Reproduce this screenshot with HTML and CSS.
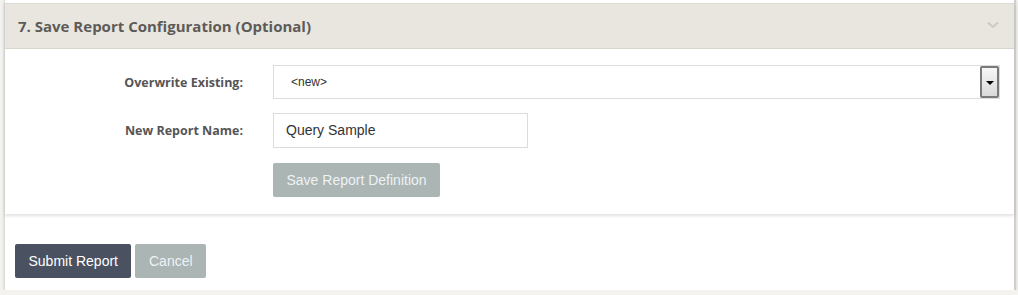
FILE: index.html
```html
<!DOCTYPE html>
<html lang="en">
<head>
    <meta charset="UTF-8">
    <title>Save Report</title>
    <link rel="stylesheet" href="styles.css">
</head>
<body>
    <div class="page">
        <!-- Step 7 panel -->
        <div class="panel">
            <div class="panel-header">
                <h3>7. Save Report Configuration (Optional)</h3>
                <svg class="chevron" width="12" height="8" viewBox="0 0 12 8"><path d="M1 1.5 L6 6 L11 1.5" fill="none" stroke="#cdcac2" stroke-width="2"/></svg>
            </div>
            <div class="panel-body">
                <div class="form-row">
                    <label>Overwrite Existing:</label>
                    <div class="select-box">
                        <span class="select-text">&lt;new&gt;</span>
                        <span class="select-arrow"><span class="tri"></span></span>
                    </div>
                </div>
                <div class="form-row">
                    <label>New Report Name:</label>
                    <div class="text-input">Query Sample</div>
                </div>
                <div class="form-row form-row-btn">
                    <span></span>
                    <div><button class="btn btn-grey">Save Report Definition</button></div>
                </div>
            </div>
        </div>

        <div class="actions">
            <button class="btn btn-dark">Submit Report</button>
            <button class="btn btn-grey">Cancel</button>
        </div>
    </div>
</body>
</html>
```

FILE: styles.css
```css
body {
    margin: 0;
    padding: 0;
    background-color: #f4f3ef;
    font-family: "Liberation Sans", Arial, sans-serif;
}
.page {
    margin: 0 2px 0 4px;
    height: 290px;
    box-sizing: border-box;
    background-color: #fff;
    border-left: 1px solid #dcdcdc;
    border-right: 2px solid #cfcfcf;
    box-shadow: 0 1px 3px rgba(0, 0, 0, 0.15);
    padding-top: 3px;
}
.panel {
    background-color: #fff;
    border-top: 1px solid #dedbd3;
    box-shadow: 0 2px 3px rgba(0, 0, 0, 0.12);
}
.panel-header {
    height: 45px;
    background-color: #e9e6df;
    border-bottom: 1px solid #d9d6ce;
    display: flex;
    align-items: center;
    justify-content: space-between;
    padding: 0 15px 0 13px;
    box-sizing: border-box;
}
.panel-header h3 {
    margin: 0;
    font-family: "Open Sans", sans-serif;
    font-size: 15px;
    font-weight: 700;
    color: #5d5b58;
}
.chevron {
    margin-top: -2px;
}
.panel-body {
    padding: 16px 14px 17px 0;
    display: flex;
    flex-direction: column;
    gap: 14px;
}
.form-row-btn {
    margin-top: 1px;
}
.form-row {
    display: grid;
    grid-template-columns: 238px 1fr;
    column-gap: 30px;
    align-items: center;
}
.form-row label {
    text-align: right;
    font-family: "Open Sans", sans-serif;
    font-size: 12.5px;
    font-weight: 700;
    color: #555;
}
.select-box {
    height: 34px;
    box-sizing: border-box;
    border: 1px solid #dcdcdc;
    display: flex;
    align-items: center;
}
.select-text {
    flex: 1;
    padding-left: 17px;
    font-size: 12px;
    color: #333;
}
.select-arrow {
    width: 19px;
    height: 32px;
    box-sizing: border-box;
    border: 2px solid #7a7a7a;
    border-radius: 2px;
    background: linear-gradient(#f7f7f7, #d9d9d9);
    display: flex;
    align-items: center;
    justify-content: center;
}
.tri {
    width: 0;
    height: 0;
    border-left: 4px solid transparent;
    border-right: 4px solid transparent;
    border-top: 4px solid #000;
    margin-top: 2px;
}
.text-input {
    width: 255px;
    height: 35px;
    box-sizing: border-box;
    border: 1px solid #dcdcdc;
    padding-left: 12px;
    line-height: 33px;
    font-size: 14px;
    color: #333;
}
.btn {
    font-family: "Liberation Sans", Arial, sans-serif;
    font-size: 14px;
    height: 34px;
    padding: 0 13.5px;
    border: none;
    border-radius: 2px;
    color: #fff;
    cursor: pointer;
}
.btn-grey {
    background-color: #aab5b4;
    color: #eef2f4;
}
.btn-dark {
    background-color: #4a5161;
}
.actions {
    margin-top: 30px;
    padding-left: 10px;
    display: flex;
    gap: 4px;
}
```
